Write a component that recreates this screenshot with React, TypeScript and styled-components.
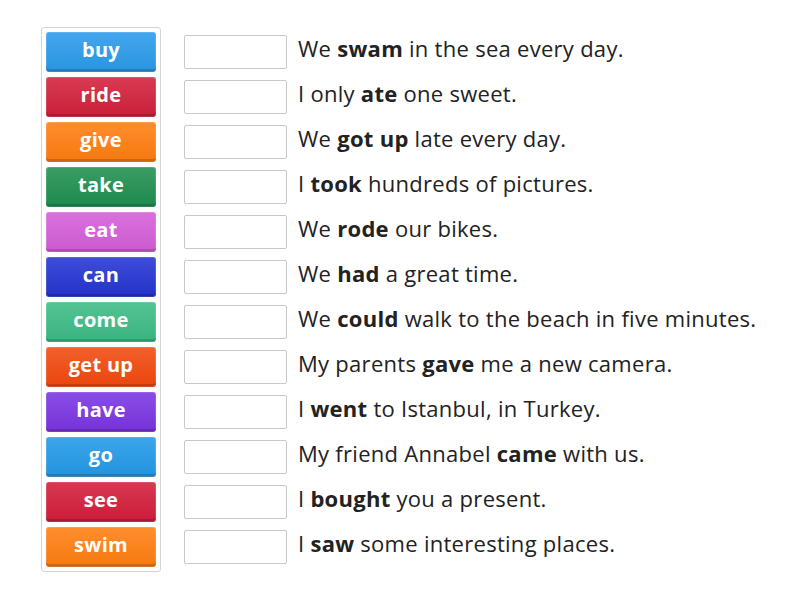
import React from 'react';
import styled, { createGlobalStyle, css } from 'styled-components';

const GlobalStyle = createGlobalStyle`
  html, body {
    margin: 0;
    padding: 0;
    background: #fff;
  }
  body {
    font-family: 'Open Sans', 'Liberation Sans', sans-serif;
  }
`;

type Item = { word: string; color: string; sentence: [string, string, string] };

const items: Item[] = [
  { word: 'buy', color: '#2a9ae9', sentence: ['We ', 'swam', ' in the sea every day.'] },
  { word: 'ride', color: '#d2203b', sentence: ['I only ', 'ate', ' one sweet.'] },
  { word: 'give', color: '#ff7d10', sentence: ['We ', 'got up', ' late every day.'] },
  { word: 'take', color: '#1f8f4f', sentence: ['I ', 'took', ' hundreds of pictures.'] },
  { word: 'eat', color: '#d45dd8', sentence: ['We ', 'rode', ' our bikes.'] },
  { word: 'can', color: '#2434d2', sentence: ['We ', 'had', ' a great time.'] },
  { word: 'come', color: '#3cbb85', sentence: ['We ', 'could', ' walk to the beach in five minutes.'] },
  { word: 'get up', color: '#f2490d', sentence: ['My parents ', 'gave', ' me a new camera.'] },
  { word: 'have', color: '#7a34e2', sentence: ['I ', 'went', ' to Istanbul, in Turkey.'] },
  { word: 'go', color: '#2299e8', sentence: ['My friend Annabel ', 'came', ' with us.'] },
  { word: 'see', color: '#d31d3a', sentence: ['I ', 'bought', ' you a present.'] },
  { word: 'swim', color: '#ff7e11', sentence: ['I ', 'saw', ' some interesting places.'] },
];

const Page = styled.div`
  display: flex;
  align-items: flex-start;
  padding: 27px 0 0 41px;
`;

const WordBank = styled.div`
  display: flex;
  flex-direction: column;
  gap: 5px;
  padding: 4px;
  border: 1px solid #d4d4d4;
  border-radius: 3px;
`;

const WordTile = styled.div<{ $color: string }>`
  ${({ $color }) => css`
    display: flex;
    align-items: center;
    justify-content: center;
    width: 110px;
    height: 40px;
    box-sizing: border-box;
    padding-bottom: 5px;
    border-radius: 3px;
    color: #fff;
    font-weight: 700;
    font-size: 20px;
    letter-spacing: 0.3px;
    background: linear-gradient(rgb(255 255 255 / 12%), rgb(0 0 0 / 4%)), ${$color};
    box-shadow:
      inset 0 -3px 0 rgb(0 0 0 / 16%),
      inset 0 0 0 1px rgb(255 255 255 / 14%);
  `}
`;

const Sentences = styled.div`
  display: flex;
  flex-direction: column;
  gap: 5px;
  padding: 5px 0 0 23px;
`;

const Row = styled.div`
  display: flex;
  align-items: center;
  height: 40px;
`;

const DropBox = styled.div`
  width: 103px;
  height: 34px;
  box-sizing: border-box;
  border: 1px solid #c8c8c8;
  border-radius: 2px;
  background: #fff;
  flex-shrink: 0;
`;

const Sentence = styled.p`
  margin: 0 0 9px 11px;
  color: #222;
  font-size: 22px;
  letter-spacing: 0.28px;
  white-space: nowrap;

  b {
    font-weight: 700;
  }
`;

export default function App() {
  return (
    <>
      <GlobalStyle />
      <Page>
        <WordBank>
          {items.map((item) => (
            <WordTile key={item.word} $color={item.color}>
              {item.word}
            </WordTile>
          ))}
        </WordBank>
        <Sentences>
          {items.map((item) => (
            <Row key={item.word}>
              <DropBox />
              <Sentence>
                {item.sentence[0]}
                <b>{item.sentence[1]}</b>
                {item.sentence[2]}
              </Sentence>
            </Row>
          ))}
        </Sentences>
      </Page>
    </>
  );
}
